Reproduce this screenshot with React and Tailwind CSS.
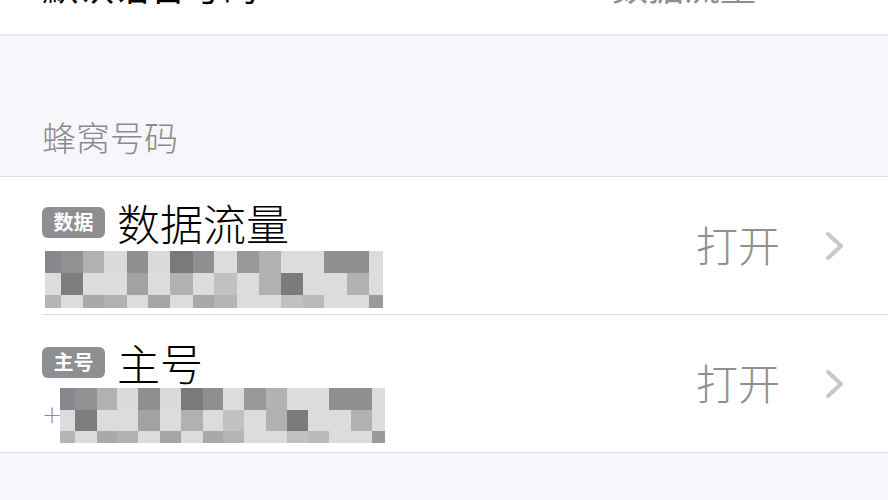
import React from "react";

const font = { fontFamily: '"Noto Sans CJK SC", "Noto Sans", sans-serif' };

const cols1 = "grid-cols-[16px_22px_21px_23px_21px_22px_23px_21px_23px_22px_22px_22px_21px_23px_22px_14px]";
const cols2 = "grid-cols-[15px_22px_20px_21px_22px_21px_22px_20px_21px_22px_21px_21px_21px_22px_21px_13px]";

// mosaic cells, three bands of sixteen
const mosaic = [
  [
    "bg-[#88888c]", "bg-[#919193]", "bg-[#b1b1b4]", "bg-[#dadadd]",
    "bg-[#8f8f92]", "bg-[#dadadd]", "bg-[#7a7a7d]", "bg-[#8f8f92]",
    "bg-[#dcdcdf]", "bg-[#99999c]", "bg-[#b2b2b5]", "bg-[#dcdcdf]",
    "bg-[#dcdcdf]", "bg-[#909093]", "bg-[#909093]", "bg-[#dcdcdf]",
  ],
  [
    "bg-[#dcdcdf]", "bg-[#7e7e81]", "bg-[#dcdcdf]", "bg-[#dcdcdf]",
    "bg-[#a2a2a5]", "bg-[#dcdcdf]", "bg-[#b1b1b4]", "bg-[#dcdcdf]",
    "bg-[#c1c1c4]", "bg-[#dcdcdf]", "bg-[#b1b1b4]", "bg-[#7b7b7e]",
    "bg-[#dcdcdf]", "bg-[#dcdcdf]", "bg-[#b2b2b5]", "bg-[#dcdcdf]",
  ],
  [
    "bg-[#b5b5b8]", "bg-[#dcdcdf]", "bg-[#a9a9ac]", "bg-[#b1b1b4]",
    "bg-[#dcdcdf]", "bg-[#a5a5a8]", "bg-[#dcdcdf]", "bg-[#a9a9ac]",
    "bg-[#b5b5b8]", "bg-[#dcdcdf]", "bg-[#dcdcdf]", "bg-[#c1c1c4]",
    "bg-[#b9b9bc]", "bg-[#dcdcdf]", "bg-[#dcdcdf]", "bg-[#9a9a9d]",
  ],
];

function Mosaic({ cols, rows }) {
  return (
    <div className={`grid ${cols} ${rows}`}>
      {mosaic.flat().map((c, i) => (
        <div key={i} className={c}></div>
      ))}
    </div>
  );
}

function Chevron() {
  return (
    <svg width="22" height="32" viewBox="0 0 22 32" fill="none">
      <polyline
        points="4,4 17,16 4,28"
        stroke="#c7c7cc"
        strokeWidth="4"
        strokeLinecap="round"
        strokeLinejoin="round"
      />
    </svg>
  );
}

function LineRow({ badge, title, plus, top, gap }) {
  return (
    <div className="h-[137px] flex items-stretch">
      <div className={`flex flex-col pl-[42px] ${top}`}>
        <div className="h-[52px] flex items-center gap-[12px]">
          <span className="h-[31px] w-[63px] rounded-[6px] bg-[#8e8e93] text-white text-[20px] font-semibold flex items-center justify-center leading-none">
            {badge}
          </span>
          <span className="text-[43px] font-light text-black leading-none">{title}</span>
        </div>
        <div className={`flex items-center ${gap}`}>
          {plus ? (
            <>
              <span
                className="shrink-0 w-[18px] text-[24px] text-[#8e8e93] leading-none -mt-[2px]"
                style={{ fontFamily: '"DejaVu Sans", sans-serif', fontWeight: 300 }}
              >
                +
              </span>
              <Mosaic cols={cols2} rows="grid-rows-[22px_21px_12px]" />
            </>
          ) : (
            <div className="ml-[3px]">
              <Mosaic cols={cols1} rows="grid-rows-[22px_22px_13px]" />
            </div>
          )}
        </div>
      </div>
      <div className="flex-1 flex items-center justify-end pr-[42px] gap-[44px]">
        <span className="text-[42px] font-light text-[#8e8e93] leading-none -mt-[3px]">打开</span>
        <Chevron />
      </div>
    </div>
  );
}

export default function App() {
  return (
    <div className="w-[888px] h-[500px] overflow-hidden bg-[#f6f6fb]" style={font}>
      {/* top row, mostly scrolled off */}
      <div className="bg-white h-[100px] -mt-[64px] flex items-center justify-between px-[42px] border-b-2 border-[#e9e8ed]">
        <span className="text-[36px] text-black leading-none">默认语音号码</span>
        <span className="text-[36px] text-[#8e8e93] leading-none mr-[90px]">数据流量</span>
      </div>

      <div className="h-[140px] flex items-end px-[42px] pb-[22px]">
        <span className="text-[34px] font-light text-[#8a8a8e] leading-none">蜂窝号码</span>
      </div>

      <div className="bg-white border-t border-b border-[#dcdcdf]">
        <LineRow badge="数据" title="数据流量" top="pt-[19px]" gap="mt-[3px]" />
        <div className="ml-[42px] h-px bg-[#dcdcdf]"></div>
        <LineRow badge="主号" title="主号" plus top="pt-[21px]" gap="mt-[0px]" />
      </div>
    </div>
  );
}
